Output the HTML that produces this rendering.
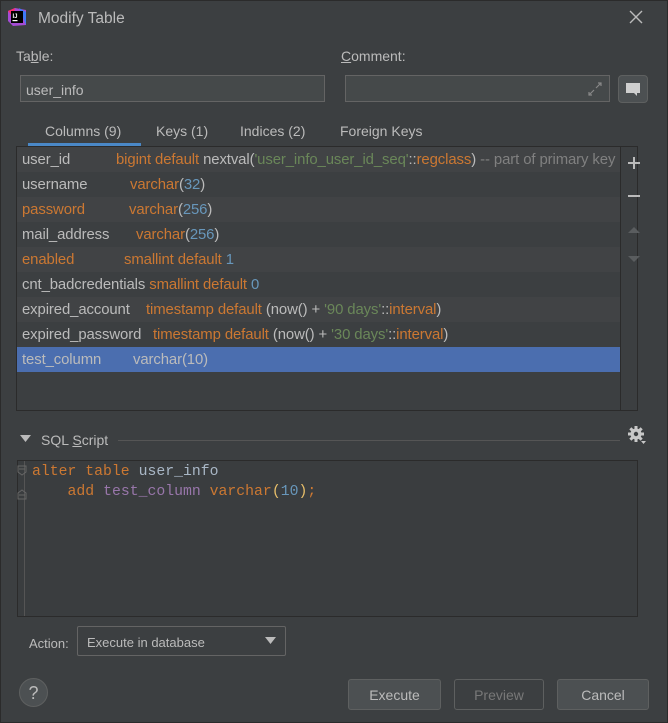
<!DOCTYPE html>
<html><head><style>
*{box-sizing:border-box;margin:0;padding:0}
body{width:668px;height:723px;background:#3c3f41;font-family:"Liberation Sans",sans-serif;font-size:13.5px;color:#bbbbbb;position:relative;overflow:hidden}
.a{position:absolute}
.o{color:#cc7832}.b{color:#6897bb}.g{color:#6a8759}.c{color:#808080}
.row{position:absolute;left:17px;width:603px;height:25px;line-height:26px;white-space:nowrap;padding-left:5px;font-size:14.9px;letter-spacing:-0.1px}
.alt{background:#414345}
.btn{position:absolute;top:679px;height:31px;border:1px solid #5e6060;border-radius:3px;background:#4c5052;text-align:center;line-height:30px;font-size:14px;color:#bbbbbb}
</style></head><body>
<div class="a" style="left:0;top:0;width:668px;height:723px;border:1px solid #2b2b2b"></div>
<svg class="a" style="left:7px;top:7px" width="20" height="20" viewBox="0 0 20 20">
<path d="M1 4 L8 1 L19 3 L19 18 L6 19 L1 14 Z" fill="#a54bd6"/><path d="M1 4 L8 1 L6 10 Z" fill="#ff2b6d"/><path d="M12 1 L19 5 L19 18 Z" fill="#3d7bf7"/>
<rect x="4" y="4" width="12" height="12" fill="#000"/>
<text x="5.5" y="11" font-size="6" fill="#fff" font-family="Liberation Sans" font-weight="bold">IJ</text>
<rect x="5.5" y="13" width="5" height="1.2" fill="#fff"/></svg>
<div class="a" style="left:38px;top:10px;font-size:15.5px">Modify Table</div>
<svg class="a" style="left:629px;top:10px" width="14" height="14"><path d="M1 1L13 13M13 1L1 13" stroke="#bbb" stroke-width="1.4"/></svg>
<div class="a" style="left:16px;top:48px;font-size:14px">Ta<u>b</u>le:</div>
<div class="a" style="left:341px;top:48px;font-size:14px"><u>C</u>omment:</div>
<div class="a" style="left:20px;top:75px;width:305px;height:27px;border:1px solid #646464;background:#45494a;padding:6px 5px 0;font-size:14px">user_info</div>
<div class="a" style="left:345px;top:75px;width:265px;height:27px;border:1px solid #646464;background:#45494a"></div>
<svg class="a" style="left:587px;top:81px" width="16" height="16"><path d="M9 7L14 2M11 2h3v3M7 9L2 14M2 11v3h3" stroke="#888" stroke-width="1.2" fill="none"/></svg>
<div class="a" style="left:618px;top:75px;width:30px;height:28px;border-radius:4px;background:#4c5052;border:1px solid #5e6060"></div>
<svg class="a" style="left:624px;top:80px" width="18" height="18"><path d="M2 3h14v10h-3v3l-3-3H2z" fill="#cfcfcf" stroke-linejoin="round"/></svg>
<div class="a" style="left:45px;top:123px;font-size:14px">Columns (9)</div>
<div class="a" style="left:28px;top:143px;width:113px;height:3px;background:#4a88c7"></div>
<div class="a" style="left:156px;top:123px;font-size:14px">Keys (1)</div>
<div class="a" style="left:240px;top:123px;font-size:14px">Indices (2)</div>
<div class="a" style="left:340px;top:123px;font-size:14px">Foreign Keys</div>
<div class="a" style="left:16px;top:146px;width:622px;height:265px;border:1px solid #2b2b2b"></div>
<div class="a" style="left:620px;top:147px;width:1px;height:263px;background:#2b2b2b"></div>
<div class="row alt" style="top:147px">user_id<span style="position:absolute;left:99px"><span class="o">bigint default </span>nextval(<span class="g">'user_info_user_id_seq'</span>::<span class="o">regclass</span>) <span class="c">-- part of primary key</span></span></div>
<div class="row" style="top:172px">username<span style="position:absolute;left:113px"><span class="o">varchar</span>(<span class="b">32</span>)</span></div>
<div class="row alt" style="top:197px"><span class="o">password</span><span style="position:absolute;left:112px"><span class="o">varchar</span>(<span class="b">256</span>)</span></div>
<div class="row" style="top:222px">mail_address<span style="position:absolute;left:119px"><span class="o">varchar</span>(<span class="b">256</span>)</span></div>
<div class="row alt" style="top:247px"><span class="o">enabled</span><span style="position:absolute;left:107px"><span class="o">smallint default </span><span class="b">1</span></span></div>
<div class="row" style="top:272px">cnt_badcredentials <span class="o">smallint default </span><span class="b">0</span></div>
<div class="row alt" style="top:297px">expired_account<span style="position:absolute;left:129px"><span class="o">timestamp default </span>(now() + <span class="g">'90 days'</span>::<span class="o">interval</span>)</span></div>
<div class="row" style="top:322px">expired_password<span style="position:absolute;left:136px"><span class="o">timestamp default </span>(now() + <span class="g">'30 days'</span>::<span class="o">interval</span>)</span></div>
<div class="row" style="top:347px;background:#4b6eaf">test_column<span style="position:absolute;left:116px">varchar(10)</span></div>
<svg class="a" style="left:626px;top:155px" width="16" height="120">
<path d="M8 2v12M2 8h12" stroke="#bbb" stroke-width="2"/>
<path d="M2 41h12" stroke="#bbb" stroke-width="2"/>
<path d="M2 78l6-6 6 6z" fill="#5a5d5f"/>
<path d="M2 101l6 6 6-6z" fill="#5a5d5f"/></svg>
<svg class="a" style="left:20px;top:434px" width="12" height="10"><path d="M0 1h11L5.5 8z" fill="#bbb"/></svg>
<div class="a" style="left:41px;top:432px;font-size:14px">SQL <u>S</u>cript</div>
<div class="a" style="left:118px;top:440px;width:502px;height:1px;background:#555"></div>
<svg class="a" style="left:627px;top:425px" width="20" height="20" viewBox="0 0 20 20"><g fill="#c8c8c8"><circle cx="9" cy="9" r="5.5"/><rect x="7.5" y="1" width="3" height="16"/><rect x="1" y="7.5" width="16" height="3"/><rect x="7.5" y="1" width="3" height="16" transform="rotate(45 9 9)"/><rect x="7.5" y="1" width="3" height="16" transform="rotate(-45 9 9)"/></g><circle cx="9" cy="9" r="2.2" fill="#3c3f41"/><path d="M14 16h5l-2.5 3z" fill="#c8c8c8"/></svg>
<div class="a" style="left:17px;top:460px;width:621px;height:157px;border:1px solid #2b2b2b;background:#3a3d3f"></div>
<div class="a" style="left:24px;top:461px;width:1px;height:155px;background:#555"></div>
<svg class="a" style="left:16px;top:463px" width="14" height="50"><path d="M2 3h8v6l-4 3-4-3z" fill="none" stroke="#666"/><path d="M3 6h6" stroke="#666"/><path d="M2 30l4-3 4 3v6H2z" fill="none" stroke="#666"/><path d="M3 32h6" stroke="#666"/></svg>
<div class="a" style="left:32px;top:462px;font-family:'Liberation Mono',monospace;font-size:14.8px;line-height:20px;white-space:pre;color:#a9b7c6"><span class="o">alter table </span>user_info
    <span class="o">add </span><span style="color:#9876aa">test_column</span> <span class="o">varchar</span><span style="color:#e8bf6a">(</span><span class="b">10</span><span style="color:#e8bf6a">)</span><span class="o">;</span></div>
<div class="a" style="left:29px;top:636px;font-size:13px">Action:</div>
<div class="a" style="left:77px;top:626px;width:209px;height:30px;border:1px solid #646464;border-radius:2px;background:#3c3f41;padding:8px 9px 0;font-size:13px">Execute in database</div>
<svg class="a" style="left:265px;top:637px" width="12" height="8"><path d="M0 0h11L5.5 7z" fill="#bbb"/></svg>
<div class="a" style="left:19px;top:678px;width:29px;height:29px;border-radius:50%;background:#4c5052;border:1px solid #5e6060;text-align:center;line-height:28px;font-size:18px;color:#bbb">?</div>
<div class="btn" style="left:348px;width:93px">Execute</div>
<div class="btn" style="left:454px;width:90px;background:#3c3f41;color:#787878">Preview</div>
<div class="btn" style="left:557px;width:92px">Cancel</div>
</body></html>
